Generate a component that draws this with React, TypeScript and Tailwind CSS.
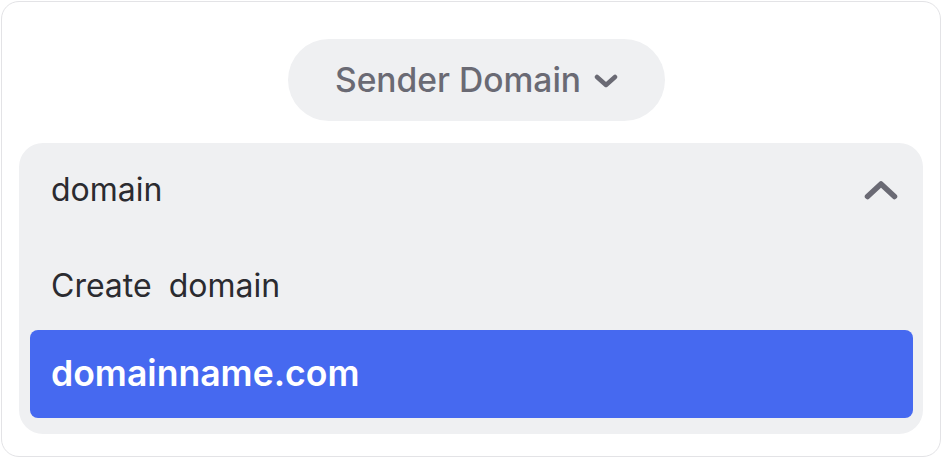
export default function App() {
  return (
    <div className="w-[942px] h-[459px] bg-white p-px" style={{ fontFamily: "Inter, 'Noto Sans', sans-serif" }}>
      <div className="h-[456px] w-[940px] rounded-[18px] border border-[#e3e3e6] bg-white flex flex-col items-center pt-[37px] px-[17px]">
        <button className="ml-[11px] h-[82px] w-[377px] rounded-full bg-[#eff0f2] flex items-center justify-center gap-[13px] text-[33.6px] font-medium text-[#6a6a74]">
          <span>Sender Domain</span>
          <svg width="24" height="14" viewBox="0 0 24 14" className="mt-[2px]">
            <path d="M3 3 L12 11 L21 3" fill="none" stroke="#6a6a74" strokeWidth="4.5" strokeLinecap="round" strokeLinejoin="round" />
          </svg>
        </button>
        <div className="mt-[22px] w-full h-[291px] rounded-[24px] bg-[#eff0f2] flex flex-col">
          <div className="h-[94px] flex items-center justify-between pl-[32px] pr-[25px] text-[32px] text-[#2b2b30]">
            <span>domain</span>
            <svg width="34" height="20" viewBox="0 0 34 20">
              <path d="M3.5 16.5 L17 4 L30.5 16.5" fill="none" stroke="#6a6a74" strokeWidth="5.5" strokeLinecap="round" strokeLinejoin="round" />
            </svg>
          </div>
          <div className="px-[11px] pr-[10px] flex flex-col">
            <div className="h-[93px] flex items-center pl-[21px] text-[32px] text-[#2b2b30] [word-spacing:8px] pt-[4px]">Create domain</div>
            <div className="h-[88px] rounded-[8px] bg-[#4669f0] flex items-center pl-[21px] text-[35.6px] font-semibold text-white">domainname.com</div>
          </div>
        </div>
      </div>
    </div>
  );
}
